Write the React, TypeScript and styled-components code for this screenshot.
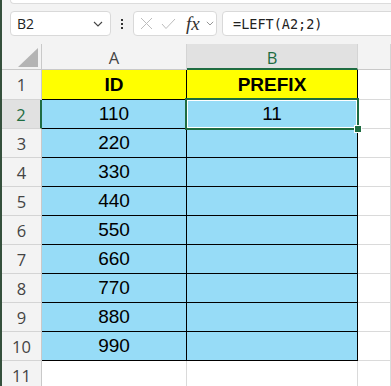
import React from "react"
import styled, { createGlobalStyle } from "styled-components"

const GlobalStyle = createGlobalStyle`
  html, body {
    margin: 0;
    padding: 0;
    background: #ffffff;
  }
  * {
    box-sizing: border-box;
  }
`

const GREEN = "#1e6c41"

const Frame = styled.div`
  width: 391px;
  height: 386px;
  overflow: hidden;
  display: flex;
  flex-direction: column;
  border-left: 2px solid #35503c;
  background: #ffffff;
  font-family: "Open Sans", "Liberation Sans", sans-serif;
`

const Toolbar = styled.div`
  height: 44px;
  flex-shrink: 0;
  display: flex;
  flex-direction: column;
  background: #f3f3f3;
`

const RibbonEdge = styled.div`
  height: 4px;
  margin-left: 8px;
  background: #ffffff;
  border: 1px solid #dcdcdc;
  border-top: none;
  border-right: none;
  border-radius: 0 0 0 6px;
`

const FormulaRow = styled.div`
  display: flex;
  align-items: center;
  height: 25px;
  margin-top: 7px;
  padding-left: 8px;
`

const Box = styled.div<{ $width?: number }>`
  height: 25px;
  display: flex;
  align-items: center;
  background: #ffffff;
  border: 1px solid #d9d9d9;
  border-radius: 4px;
  ${({ $width }) => ($width ? `width: ${$width}px;` : "flex: 1;")}
  flex-shrink: 0;
`

const NameText = styled.span`
  flex: 1;
  padding-left: 6px;
  font-size: 14px;
  color: #222;
`

const Dots = styled.div`
  width: 22px;
  display: flex;
  flex-direction: column;
  align-items: center;
  gap: 2px;
  span {
    width: 2px;
    height: 2px;
    background: #333;
  }
`

const FxBox = styled(Box)`
  padding-left: 6px;
`

const FxLabel = styled.span`
  font-family: "Liberation Serif", serif;
  font-style: italic;
  font-size: 19px;
  line-height: 1;
  color: #333;
  margin-left: 10px;
`

const FormulaBox = styled(Box)`
  margin-left: 5px;
  margin-right: -6px;
  padding-left: 10px;
  font-family: "DejaVu Sans Mono", "Liberation Mono", monospace;
  font-size: 13.5px;
  color: #222;
`

const Sheet = styled.div`
  flex: 1;
  display: flex;
  flex-direction: column;
`

const Row = styled.div<{ $height: number }>`
  display: flex;
  height: ${({ $height }) => $height}px;
  flex-shrink: 0;
`

const Corner = styled.div`
  width: 40px;
  flex-shrink: 0;
  position: relative;
  background: #f3f3f3;
  border-right: 1px solid #c9c9c9;
  border-bottom: 1px solid #c9c9c9;
  svg {
    position: absolute;
    right: 3px;
    bottom: 2px;
  }
`

const ColHeader = styled.div<{ $width?: number; $active?: boolean }>`
  ${({ $width }) => ($width ? `width: ${$width}px;` : "flex: 1;")}
  flex-shrink: 0;
  display: flex;
  align-items: center;
  justify-content: center;
  font-size: 16.5px;
  padding-top: 2px;
  color: ${({ $active }) => ($active ? GREEN : "#444")};
  background: ${({ $active }) => ($active ? "#e1e1e1" : "#f3f3f3")};
  border-right: 1px solid #d4d4d4;
  border-bottom: ${({ $active }) =>
    $active ? `2px solid ${GREEN}` : "1px solid #c9c9c9"};
`

const RowHeader = styled.div<{ $active?: boolean }>`
  width: 40px;
  flex-shrink: 0;
  display: flex;
  align-items: center;
  justify-content: center;
  font-size: 16.5px;
  color: ${({ $active }) => ($active ? GREEN : "#444")};
  background: ${({ $active }) => ($active ? "#e1e1e1" : "#f3f3f3")};
  border-bottom: 1px solid #d4d4d4;
  border-right: ${({ $active }) =>
    $active ? `2px solid ${GREEN}` : "1px solid #c9c9c9"};
`

const Cell = styled.div<{ $width?: number; $fill?: string; $bold?: boolean; $table?: boolean }>`
  ${({ $width }) => ($width ? `width: ${$width}px;` : "flex: 1;")}
  flex-shrink: 0;
  position: relative;
  display: flex;
  align-items: center;
  justify-content: center;
  font-family: "Liberation Sans", Arial, sans-serif;
  font-size: 19px;
  font-weight: ${({ $bold }) => ($bold ? 700 : 400)};
  color: #000;
  background: ${({ $fill }) => $fill ?? "#ffffff"};
  border-right: 1px solid ${({ $table }) => ($table ? "#000" : "#dadada")};
  border-bottom: 1px solid ${({ $table }) => ($table ? "#000" : "#dadada")};
`

const Selection = styled.div`
  position: absolute;
  z-index: 2;
  left: -2px;
  top: -2px;
  right: -2px;
  bottom: -2px;
  border: 2px solid ${GREEN};
  box-shadow: inset 0 0 0 1px #ffffff;
  pointer-events: none;
`

const Handle = styled.div`
  position: absolute;
  right: -4px;
  bottom: -4px;
  width: 6px;
  height: 6px;
  background: ${GREEN};
  outline: 1px solid #ffffff;
`

const YELLOW = "#ffff00"
const BLUE = "#97dcf7"

const ids = ["110", "220", "330", "440", "550", "660", "770", "880", "990"]

function Chevron({ size = 10, color = "#444" }: { size?: number; color?: string }) {
  return (
    <svg width={size} height={size * 0.6} viewBox="0 0 10 6">
      <path d="M1 1 L5 5 L9 1" fill="none" stroke={color} strokeWidth="1.1" />
    </svg>
  )
}

export default function App() {
  return (
    <>
      <GlobalStyle />
      <Frame>
        <Toolbar>
          <RibbonEdge />
          <FormulaRow>
            <Box $width={101}>
              <NameText>B2</NameText>
              <span style={{ marginRight: 7, display: "flex" }}>
                <Chevron />
              </span>
            </Box>
            <Dots>
              <span />
              <span />
              <span />
            </Dots>
            <FxBox $width={84}>
              <svg width="13" height="13" viewBox="0 0 13 13">
                <path d="M1 1 L12 12 M12 1 L1 12" stroke="#bdbdbd" strokeWidth="1" fill="none" />
              </svg>
              <svg width="15" height="12" viewBox="0 0 15 12" style={{ marginLeft: 8 }}>
                <path d="M1 6 L5 10.5 L14 1" stroke="#bdbdbd" strokeWidth="1" fill="none" />
              </svg>
              <FxLabel>fx</FxLabel>
              <span style={{ marginLeft: 6, display: "flex" }}>
                <Chevron size={8} color="#888" />
              </span>
            </FxBox>
            <FormulaBox>=LEFT(A2;2)</FormulaBox>
          </FormulaRow>
        </Toolbar>
        <Sheet>
          <Row $height={26}>
            <Corner>
              <svg width="20" height="19" viewBox="0 0 20 19">
                <path d="M20 0 L20 19 L0 19 Z" fill="#b4b4b4" />
              </svg>
            </Corner>
            <ColHeader $width={145}>A</ColHeader>
            <ColHeader $width={171} $active>
              B
            </ColHeader>
            <ColHeader />
          </Row>
          <Row $height={30}>
            <RowHeader>1</RowHeader>
            <Cell $width={145} $fill={YELLOW} $bold $table>
              ID
            </Cell>
            <Cell $width={171} $fill={YELLOW} $bold $table>
              PREFIX
            </Cell>
            <Cell />
          </Row>
          {ids.map((id, i) => (
            <Row $height={29} key={id}>
              <RowHeader $active={i === 0}>{i + 2}</RowHeader>
              <Cell $width={145} $fill={BLUE} $table>
                {id}
              </Cell>
              <Cell $width={171} $fill={BLUE} $table>
                {i === 0 ? "11" : ""}
                {i === 0 && (
                  <Selection>
                    <Handle />
                  </Selection>
                )}
              </Cell>
              <Cell />
            </Row>
          ))}
          <Row $height={29}>
            <RowHeader>11</RowHeader>
            <Cell $width={145} />
            <Cell $width={171} />
            <Cell />
          </Row>
        </Sheet>
      </Frame>
    </>
  )
}
